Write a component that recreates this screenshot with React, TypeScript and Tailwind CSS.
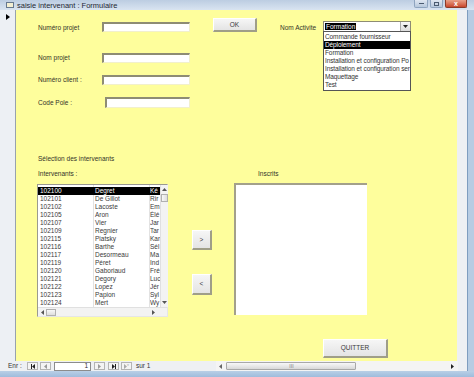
import React from "react";

const rows: Array<[string, string, string]> = [
  ["102100", "Degret", "Ké"],
  ["102101", "De Gillot", "Rir"],
  ["102102", "Lacoste", "Em"],
  ["102105", "Aron", "Élé"],
  ["102107", "Vier", "Jar"],
  ["102109", "Regnier", "Tar"],
  ["102115", "Piatsky", "Kar"],
  ["102116", "Barthe", "Sél"],
  ["102117", "Desormeau", "Ma"],
  ["102119", "Péret", "Ind"],
  ["102120", "Gaboriaud", "Fré"],
  ["102121", "Degory", "Luc"],
  ["102122", "Lopez", "Jér"],
  ["102123", "Papion", "Syl"],
  ["102124", "Mert", "Wy"],
];

const activites = [
  "Commande fournisseur",
  "Déploiement",
  "Formation",
  "Installation et configuration Po",
  "Installation et configuration ser",
  "Maquettage",
  "Test",
];

function Field({ className }: { className: string }) {
  return (
    <div
      className={`bg-white border-t-2 border-l-2 border-t-[#8e8c74] border-l-[#8e8c74] border-b border-r border-b-[#f2f0cc] border-r-[#f2f0cc] ${className}`}
    />
  );
}

function Btn({ className, children }: { className: string; children: React.ReactNode }) {
  return (
    <div
      className={`flex items-center justify-center bg-gradient-to-b from-[#f6f6f6] to-[#e4e4e4] border-t border-l border-t-white border-l-white border-b-2 border-r-2 border-b-[#9f9e88] border-r-[#9f9e88] text-[6.5px] text-[#3a3a3a] ${className}`}
    >
      {children}
    </div>
  );
}

function NavBtn({ children, className = "" }: { children: React.ReactNode; className?: string }) {
  return (
    <div
      className={`w-[11px] h-[8px] flex items-center justify-center bg-[#f4f4f4] border border-[#b4b4b4] ${className}`}
    >
      {children}
    </div>
  );
}

function Tri({ dir, color = "#222" }: { dir: "l" | "r"; color?: string }) {
  return (
    <svg width="3" height="5" viewBox="0 0 3 5">
      {dir === "l" ? <path d="M3 0 L0 2.5 L3 5 Z" fill={color} /> : <path d="M0 0 L3 2.5 L0 5 Z" fill={color} />}
    </svg>
  );
}

export default function App() {
  return (
    <div className="w-[474px] h-[377px] overflow-hidden flex flex-col bg-[#dfe8f2] font-['Liberation_Sans',Arial,sans-serif] text-[#33332a]">
      {/* Title bar */}
      <div className="h-[10px] flex items-center bg-gradient-to-b from-[#bccde2] to-[#d9e4f1] overflow-hidden">
        <div className="ml-[6px] w-[8px] h-[6px] border border-[#66788e] bg-[#f2eed2]" />
        <span className="ml-[3px] text-[7.5px] leading-[9px] text-[#1e2733]">
          saisie intervenant : Formulaire
        </span>
        <div className="ml-auto mr-[7px] self-start flex gap-[2px]">
          <div className="w-[14px] h-[8px] rounded-b-[2px] bg-gradient-to-b from-[#dfe7f1] to-[#b7c8dc] border border-t-0 border-[#8ea4bf] flex items-center justify-center">
            <div className="w-[5px] h-[1px] bg-[#4a5b70]" />
          </div>
          <div className="w-[13px] h-[8px] rounded-b-[2px] bg-gradient-to-b from-[#dfe7f1] to-[#b7c8dc] border border-t-0 border-[#8ea4bf] flex items-center justify-center">
            <div className="w-[5px] h-[4px] border border-[#4a5b70]" />
          </div>
          <div className="w-[22px] h-[8px] rounded-b-[2px] bg-gradient-to-b from-[#e8a088] to-[#c8452a] border border-t-0 border-[#8a3a28] flex items-center justify-center text-[7px] leading-[7px] font-bold text-white">
            x
          </div>
        </div>
      </div>

      {/* Body */}
      <div className="flex h-[351px]">
        <div className="w-[16px] bg-[#edf0f4] border-r border-[#98a2ad] flex justify-center pt-[4px]">
          <div className="w-0 h-0 border-y-[3px] border-y-transparent border-l-[4px] border-l-black" />
        </div>

        {/* Form */}
        <div className="w-[441px] bg-[#fefe9c] flex flex-col text-[6.5px] leading-[8px]">
          {/* Row 1 */}
          <div className="flex items-start">
            <span className="ml-[22px] w-[64px] mt-[14px]">Numéro projet</span>
            <Field className="mt-[12px] w-[88px] h-[10px]" />
            <Btn className="ml-[23px] mt-[8px] w-[44px] h-[14px]">OK</Btn>
            <span className="ml-[23px] w-[43px] mt-[14px]">Nom Activite</span>
            <div className="relative mt-[11px] w-[88px] h-[11px] bg-white border border-[#8e8c74] flex items-center">
              <span className="ml-[1px] px-[1px] bg-black text-white leading-[7px]">Formation</span>
              <div className="ml-auto w-[10px] h-full bg-gradient-to-b from-[#f8f8f8] to-[#dcdcdc] border-l border-[#aaa] flex items-center justify-center">
                <svg width="5" height="3" viewBox="0 0 5 3">
                  <path d="M0 0 L5 0 L2.5 3 Z" fill="#222" />
                </svg>
              </div>
              <div className="absolute left-[-1px] top-full w-[88px] bg-white border border-[#555] py-[1px]">
                {activites.map((a) => (
                  <div
                    key={a}
                    className={`h-[8px] leading-[8px] pl-[1px] whitespace-nowrap tracking-[-0.1px] ${a === "Déploiement" ? "bg-black text-white" : "text-[#333]"}`}
                  >
                    {a}
                  </div>
                ))}
              </div>
            </div>
          </div>

          {/* Row 2 */}
          <div className="flex items-center mt-[21px] h-[10px]">
            <span className="ml-[22px] w-[64px]">Nom projet</span>
            <Field className="w-[88px] h-[10px]" />
          </div>
          {/* Row 3 */}
          <div className="flex items-center mt-[12px] h-[10px]">
            <span className="ml-[22px] w-[64px]">Numéro client :</span>
            <Field className="w-[88px] h-[10px]" />
          </div>
          {/* Row 4 */}
          <div className="flex items-center mt-[12px] h-[11px]">
            <span className="ml-[22px] w-[67px]">Code Pole :</span>
            <Field className="w-[85px] h-[11px]" />
          </div>

          <span className="ml-[22px] mt-[47px]">Sélection des intervenants</span>

          {/* Lists */}
          <div className="flex items-start mt-[7px] ml-[21px]">
            <div className="flex flex-col">
              <span className="ml-[1px]">Intervenants :</span>
              <div className="mt-[6px] w-[131px] h-[133px] bg-white border-t border-l border-[#9a9a90] border-b border-r border-b-[#e6e6e6] border-r-[#e6e6e6] flex flex-col">
                <div className="flex h-[122px]">
                  <div className="w-[122px] pt-[2px] relative">
                    <div className="absolute left-[55px] top-0 bottom-0 w-px bg-[#e2e2e2]" />
                    <div className="absolute left-[111px] top-0 bottom-0 w-px bg-[#e2e2e2]" />
                    {rows.map(([id, nom, pre], i) => (
                      <div
                        key={id}
                        className={`relative flex h-[8px] leading-[8px] whitespace-nowrap overflow-hidden ${i === 0 ? "bg-black text-white" : "text-[#3a3a3a]"}`}
                      >
                        <span className="w-[56px] pl-[2px]">{id}</span>
                        <span className="w-[56px] pl-[1px]">{nom}</span>
                        <span className="w-[10px] overflow-hidden">{pre}</span>
                      </div>
                    ))}
                  </div>
                  <div className="w-[8px] bg-[#f3f3f3] border-l border-[#e0e0e0] flex flex-col items-center pt-[3px]">
                    <svg width="5" height="3" viewBox="0 0 5 3">
                      <path d="M0 3 L5 3 L2.5 0 Z" fill="#555" />
                    </svg>
                    <div className="mt-[3px] w-[7px] h-[8px] bg-gradient-to-r from-[#f8f8f8] to-[#dedede] border border-[#b0b0b0]" />
                    <svg className="mt-auto mb-[3px]" width="5" height="3" viewBox="0 0 5 3">
                      <path d="M0 0 L5 0 L2.5 3 Z" fill="#555" />
                    </svg>
                  </div>
                </div>
                <div className="h-[9px] flex items-center bg-[#f3f3f3] border-t border-[#e0e0e0]">
                  <div className="ml-[3px]">
                    <Tri dir="l" color="#555" />
                  </div>
                  <div className="ml-[2px] w-[10px] h-[7px] bg-gradient-to-b from-[#f8f8f8] to-[#dedede] border border-[#b0b0b0]" />
                  <div className="ml-auto mr-[12px]">
                    <Tri dir="r" color="#555" />
                  </div>
                </div>
              </div>
            </div>

            <div className="ml-[24px] w-[20px] flex flex-col">
              <Btn className="mt-[60px] w-[20px] h-[20px]">&gt;</Btn>
              <Btn className="mt-[24px] w-[20px] h-[21px]">&lt;</Btn>
            </div>

            <div className="ml-[22px] flex flex-col">
              <span className="ml-[24px]">Inscrits</span>
              <div className="mt-[5px] w-[133px] h-[132px] bg-white border-t-2 border-l-2 border-t-[#a3a08a] border-l-[#a3a08a]" />
            </div>
          </div>

          <Btn className="mt-[22px] ml-[307px] w-[65px] h-[19px]">QUITTER</Btn>
        </div>

        <div className="w-[10px] bg-[#eef0f3]" />
        <div className="w-[7px] bg-[#b7cce3] border-l border-[#7f9dbf]" />
      </div>

      {/* Navigation bar */}
      <div className="h-[10px] flex items-center bg-[#eef0f3] text-[6.5px] leading-[8px] text-[#333]">
        <span className="ml-[8px] w-[19px]">Enr :</span>
        <NavBtn>
          <div className="w-[1px] h-[5px] bg-[#222]" />
          <Tri dir="l" />
        </NavBtn>
        <NavBtn className="ml-[2px]">
          <Tri dir="l" color="#999" />
        </NavBtn>
        <div className="ml-[3px] w-[37px] h-[9px] bg-white border border-[#8c8c8c] flex items-center justify-end pr-[2px]">
          1
        </div>
        <NavBtn className="ml-[3px]">
          <Tri dir="r" color="#999" />
        </NavBtn>
        <NavBtn className="ml-[3px] border-[#555]">
          <Tri dir="r" />
          <div className="w-[1px] h-[5px] bg-[#222]" />
        </NavBtn>
        <NavBtn className="ml-[2px]">
          <Tri dir="r" color="#aaa" />
          <span className="text-[5px] text-[#aaa]">*</span>
        </NavBtn>
        <span className="ml-[4px]">sur 1</span>

        <div className="ml-[66px] w-[242px] h-[10px] flex items-center bg-[#f4f4f4]">
          <div className="ml-[3px]">
            <Tri dir="l" color="#666" />
          </div>
          <div className="ml-[4px] w-[130px] h-[8px] bg-gradient-to-b from-[#f8f8f8] to-[#d8d8d8] border border-[#a8a8a8] rounded-[1px] flex items-center justify-center text-[5px] text-[#777]">
            III
          </div>
          <div className="ml-auto mr-[4px]">
            <Tri dir="r" color="#222" />
          </div>
        </div>
        <div className="ml-auto w-[7px] h-full bg-[#b7cce3] border-l border-[#7f9dbf]" />
      </div>
      <div className="h-[6px] bg-gradient-to-b from-[#b9cfe6] to-[#9fbcdc]" />
    </div>
  );
}
